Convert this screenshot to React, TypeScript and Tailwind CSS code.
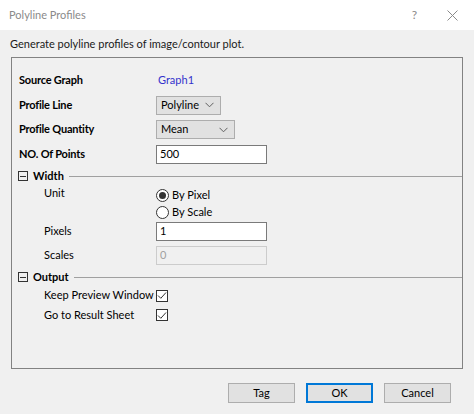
import { useState } from 'react';

function Chevron() {
  return (
    <svg width="9" height="6" viewBox="0 0 9 6" className="text-[#606060]">
      <path d="M0.5 0.8 L4.5 4.8 L8.5 0.8" fill="none" stroke="currentColor" strokeWidth="1" />
    </svg>
  );
}

function Select({ value, width }: { value: string; width: string }) {
  return (
    <div className={`flex h-[19px] ${width} shrink-0 items-center justify-between border border-[#adadad] bg-[#e1e1e1] pl-[4px] pr-[6px]`}>
      <span>{value}</span>
      <Chevron />
    </div>
  );
}

function Check() {
  return (
    <div className="flex h-[12px] w-[12px] shrink-0 items-center justify-center border border-[#333] bg-white">
      <svg width="10" height="9" viewBox="0 0 10 9">
        <path d="M1 4.5 L3.8 7.3 L9 1.5" fill="none" stroke="#333" strokeWidth="1" />
      </svg>
    </div>
  );
}

function Radio({ on }: { on: boolean }) {
  return (
    <div className="flex h-[13px] w-[13px] shrink-0 items-center justify-center rounded-full border border-[#333] bg-white">
      {on ? <div className="h-[7px] w-[7px] rounded-full bg-[#333]" /> : null}
    </div>
  );
}

function Minus() {
  return (
    <div className="flex h-[10px] w-[10px] items-center justify-center border border-[#333]">
      <div className="h-px w-[6px] bg-[#333]" />
    </div>
  );
}

function Row({ label, bold, children, h }: { label: string; bold?: boolean; children: React.ReactNode; h: string }) {
  return (
    <div className={`flex ${h} items-center`}>
      <div className={bold ? 'w-[144px] shrink-0 whitespace-nowrap pl-[7px] font-bold tracking-[-0.2px]' : 'w-[144px] shrink-0 whitespace-nowrap pl-[32px]'}>{label}</div>
      {children}
    </div>
  );
}

function Group({ title }: { title: string }) {
  return (
    <div className="flex h-[20px] items-center">
      <div className="pl-[6px] pr-[5px]"><Minus /></div>
      <span className="font-bold">{title}</span>
      <div className="ml-[5px] h-px flex-1 bg-[#a0a0a0]" />
    </div>
  );
}

export default function App() {
  const [pixels] = useState('1');
  return (
    <div className="flex h-[414px] w-[474px] flex-col bg-[#f0f0f0] text-[11px] text-[#000] [font-family:Lato,sans-serif]">
      <div className="flex h-[30px] items-center bg-white pl-[9px] text-[#8a8a8a]">
        <span className="flex-1">Polyline Profiles</span>
        <span className="mr-[30px] text-[12px]">?</span>
        <svg width="11" height="11" viewBox="0 0 11 11" className="mr-[16px]">
          <path d="M0.5 0.5 L10.5 10.5 M10.5 0.5 L0.5 10.5" stroke="#8a8a8a" strokeWidth="1" />
        </svg>
      </div>
      <div className="flex h-[22px] items-end pl-[10px] text-[#1a1a1a]">Generate polyline profiles of image/contour plot.</div>
      <div className="mx-[11px] mt-[5px] h-[312px] border border-[#828282] pt-[10px]">
        <Row label="Source Graph" bold h="h-[25px]">
          <span className="pl-[2px] text-[#3333cc]">Graph1</span>
        </Row>
        <Row label="Profile Line" bold h="h-[24px]">
          <Select value="Polyline" width="w-[65px]" />
        </Row>
        <Row label="Profile Quantity" bold h="h-[25px]">
          <Select value="Mean" width="w-[79px]" />
        </Row>
        <Row label="NO. Of Points" bold h="h-[24px]">
          <div className="flex h-[19px] w-[111px] items-center border border-[#7a7a7a] bg-white pl-[3px]">500</div>
        </Row>
        <Group title="Width" />
        <div className="flex h-[18px] items-center">
          <div className="w-[144px] shrink-0 pl-[32px] pb-[3px]">Unit</div>
          <Radio on />
          <span className="pl-[3px]">By Pixel</span>
        </div>
        <div className="flex h-[16px] items-center">
          <div className="w-[144px] shrink-0" />
          <Radio on={false} />
          <span className="pl-[3px]">By Scale</span>
        </div>
        <Row label="Pixels" h="h-[23px]">
          <div className="flex h-[19px] w-[111px] items-center border border-[#7a7a7a] bg-white pl-[3px]">{pixels}</div>
        </Row>
        <Row label="Scales" h="h-[24px]">
          <div className="flex h-[19px] w-[111px] items-center border border-[#cccccc] bg-[#f0f0f0] pl-[3px] text-[#a0a0a0]">0</div>
        </Row>
        <Group title="Output" />
        <Row label="Keep Preview Window" h="h-[17px]">
          <Check />
        </Row>
        <Row label="Go to Result Sheet" h="h-[22px]">
          <Check />
        </Row>
      </div>
      <div className="mt-[14px] flex gap-[11px] pl-[228px]">
        <button className="h-[20px] w-[67px] border border-[#adadad] bg-[#e1e1e1]">Tag</button>
        <button className="h-[20px] w-[67px] border-2 border-[#0078d7] bg-[#e1e1e1]">OK</button>
        <button className="h-[20px] w-[67px] border border-[#adadad] bg-[#e1e1e1]">Cancel</button>
      </div>
    </div>
  );
}
